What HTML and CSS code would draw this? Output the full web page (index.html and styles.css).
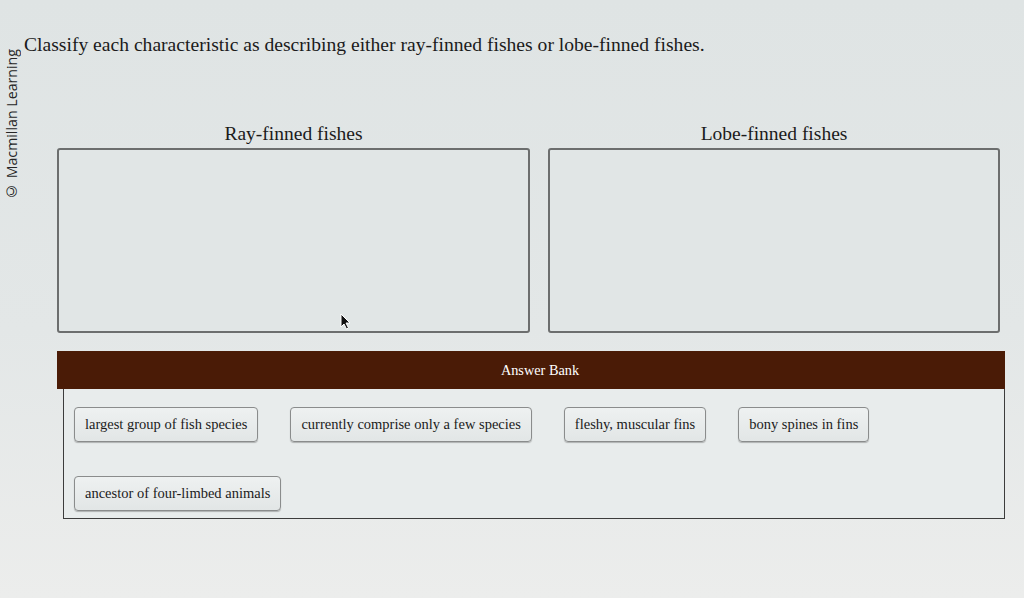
FILE: index.html
```html
<!DOCTYPE html>
<html lang="en">
<head>
    <meta charset="UTF-8">
    <meta name="viewport" content="width=device-width, initial-scale=1.0">
    <title>Classify fishes</title>
    <link rel="stylesheet" href="styles.css">
</head>
<body>

    <div class="page">
        <!-- Crédito vertical -->
        <div class="credit">© Macmillan Learning</div>

        <div class="main">
            <p class="prompt">Classify each characteristic as describing either ray-finned fishes or lobe-finned fishes.</p>

            <!-- Zonas de destino -->
            <div class="columns">
                <section class="target">
                    <h3 class="target-title">Ray-finned fishes</h3>
                    <div class="drop"></div>
                </section>
                <section class="target">
                    <h3 class="target-title">Lobe-finned fishes</h3>
                    <div class="drop"></div>
                </section>
            </div>

            <!-- Banco de respuestas -->
            <div class="bank">
                <div class="bank-head">Answer Bank</div>
                <div class="bank-body">
                    <div class="chip">largest group of fish species</div>
                    <div class="chip">currently comprise only a few species</div>
                    <div class="chip">fleshy, muscular fins</div>
                    <div class="chip">bony spines in fins</div>
                    <div class="chip">ancestor of four-limbed animals</div>
                </div>
            </div>
        </div>
    </div>

    <svg class="cursor" width="11" height="17" viewBox="0 0 11 17">
        <path d="M1 1 L1 14 L4 11 L6.5 16 L8.5 15 L6 10 L10 10 Z" fill="#111" stroke="#fff" stroke-width="1"/>
    </svg>

</body>
</html>
```

FILE: styles.css
```css
body {
    margin: 0;
    height: 598px;
    overflow: hidden;
    font-family: 'Liberation Serif', serif;
    color: #1b1b1b;
    background: linear-gradient(180deg, #dfe4e4 0%, #e3e7e7 55%, #ecedec 100%);
}

.page {
    display: flex;
}

.credit {
    writing-mode: vertical-rl;
    transform: rotate(180deg);
    font-family: 'Open Sans', sans-serif;
    font-size: 14.2px;
    color: #262626;
    width: 20px;
    margin-top: 45px;
    padding-right: 2px;
    height: 156px;
    text-align: left;
    white-space: nowrap;
}

.main {
    flex: 1;
    padding-top: 32px;
}

.prompt {
    margin: 0;
    padding-left: 2px;
    font-size: 19.6px;
    line-height: 26px;
}

.columns {
    display: grid;
    grid-template-columns: 473px 452px;
    column-gap: 18px;
    margin: 64px 0 0 35px;
}

.target-title {
    margin: 0 0 2px;
    font-weight: normal;
    font-size: 19.5px;
    line-height: 24px;
    text-align: center;
}

.drop {
    height: 181px;
    border: 2px solid #6c6e6e;
    border-radius: 3px;
    background-color: #e1e6e6;
}

.bank {
    width: 948px;
    margin: 18px 0 0 35px;
}

.bank-head {
    background-color: #4a1b06;
    color: #fff;
    text-align: center;
    font-size: 14.3px;
    line-height: 38px;
    height: 38px;
    padding-left: 18px;
}

.bank-body {
    display: flex;
    flex-wrap: wrap;
    align-content: flex-start;
    column-gap: 32px;
    row-gap: 34px;
    height: 130px;
    box-sizing: border-box;
    padding: 18px 10px 0 10px;
    margin-left: 6px;
    border: 1.5px solid #3c3c3c;
    border-top: none;
    background-color: #e8ecec;
}

.chip {
    font-size: 14.5px;
    line-height: 19px;
    padding: 7px 10px;
    border: 1px solid #8a8c8c;
    border-radius: 4px;
    background: linear-gradient(180deg, #eef1f1, #e2e6e6);
    box-shadow: 0 1px 1px rgba(0, 0, 0, 0.25);
}

.chip:nth-child(5) {
    flex-basis: 100%;
    max-width: max-content;
}

.cursor {
    position: absolute;
    left: 340px;
    top: 313px;
}
```
